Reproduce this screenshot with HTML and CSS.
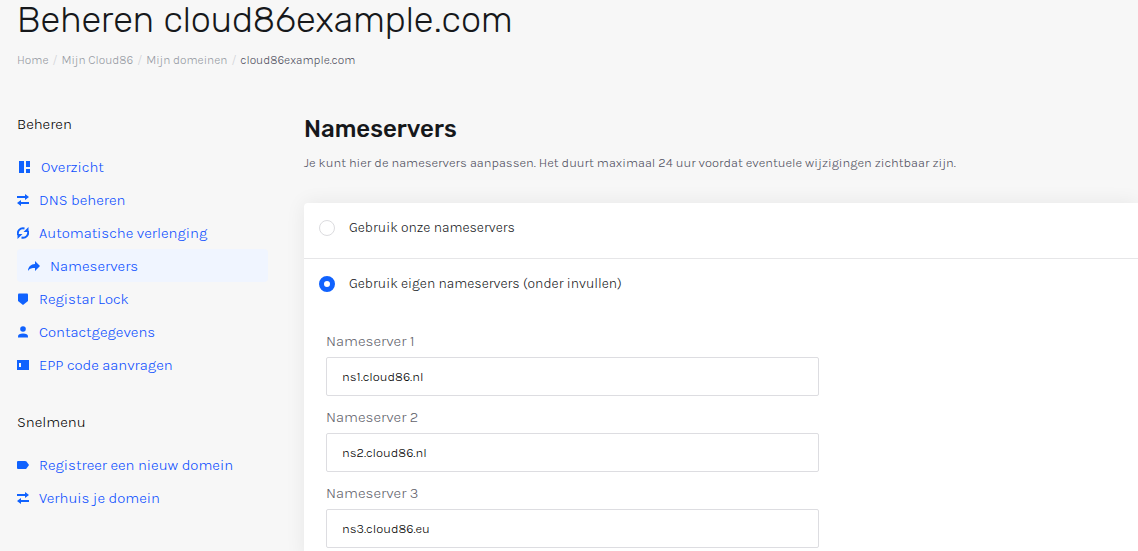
FILE: index.html
```html
<!DOCTYPE html>
<html lang="nl">
<head>
  <meta charset="UTF-8">
  <meta name="viewport" content="width=device-width, initial-scale=1.0">
  <title>Beheren cloud86example.com</title>
  <link rel="stylesheet" href="styles.css">
</head>
<body>
  <!-- Page header -->
  <header class="page-header">
    <h1>Beheren cloud86example.com</h1>
    <nav class="breadcrumb" aria-label="Breadcrumb">
      <a href="#">Home</a>
      <span class="separator">/</span>
      <a href="#">Mijn Cloud86</a>
      <span class="separator">/</span>
      <a href="#">Mijn domeinen</a>
      <span class="separator">/</span>
      <span class="current">cloud86example.com</span>
    </nav>
  </header>

  <div class="layout">
    <!-- Sidebar -->
    <aside class="sidebar">
      <h3>Beheren</h3>
      <ul class="menu">
        <li><a href="#">
          <svg class="icon icon-large" viewBox="0 0 14 12"><path d="M2 0h5v12H2zM9 0h4v6H9zM9 8h4v4H9z"/></svg>
          Overzicht
        </a></li>
        <li><a href="#">
          <svg class="icon" viewBox="0 0 12 12"><path d="M0 2h8V0l4 3-4 3V4H0zM12 8H4V6L0 9l4 3v-2h8z"/></svg>
          DNS beheren
        </a></li>
        <li><a href="#">
          <svg class="icon" viewBox="0 0 12 12"><path class="stroke" d="M1 8C0 4 3 .5 7.500 1.500M11 4c1 4-2 7.500-6.500 6.500"/><path d="M11.500 0v5H6.500zM.5 12V7h5z"/></svg>
          Automatische verlenging
        </a></li>
        <li><a href="#" class="active">
          <svg class="icon" viewBox="0 0 12 12"><path d="M7 1l5 5-5 5V8C4 8 2 8 0 11 0 7 3 4 7 4z"/></svg>
          Nameservers
        </a></li>
        <li><a href="#">
          <svg class="icon" viewBox="0 0 12 12"><path d="M1 1.500Q1 .5 2 .5h8q1 0 1 1V8L6 12 1 8z"/></svg>
          Registar Lock
        </a></li>
        <li><a href="#">
          <svg class="icon" viewBox="0 0 12 12"><circle cx="6" cy="3" r="2.800"/><path d="M1 11.500v-1C1 8.300 3 7.500 6 7.500s5 .8 5 3v1z"/></svg>
          Contactgegevens
        </a></li>
        <li><a href="#">
          <svg class="icon" viewBox="0 0 12 12"><path fill-rule="evenodd" d="M0 1h12v10H0zM2 4v4h2V4z"/></svg>
          EPP code aanvragen
        </a></li>
      </ul>

      <h3>Snelmenu</h3>
      <ul class="menu">
        <li><a href="#">
          <svg class="icon" viewBox="0 0 12 12"><path d="M0 3q0-1 1-1h7q1 0 1.500.5L12 6 9.500 9.500Q9 10 8 10H1q-1 0-1-1z"/></svg>
          Registreer een nieuw domein
        </a></li>
        <li><a href="#">
          <svg class="icon" viewBox="0 0 12 12"><path d="M0 2h8V0l4 3-4 3V4H0zM12 8H4V6L0 9l4 3v-2h8z"/></svg>
          Verhuis je domein
        </a></li>
      </ul>
    </aside>

    <!-- Nameservers -->
    <main class="content">
      <h2>Nameservers</h2>
      <p class="intro">Je kunt hier de nameservers aanpassen. Het duurt maximaal 24 uur voordat eventuele wijzigingen zichtbaar zijn.</p>

      <form class="card">
        <label class="choice" for="nsDefault">
          <input type="radio" name="nschoice" id="nsDefault" value="default">
          Gebruik onze nameservers
        </label>
        <label class="choice" for="nsCustom">
          <input type="radio" name="nschoice" id="nsCustom" value="custom" checked>
          Gebruik eigen nameservers (onder invullen)
        </label>

        <div class="fields">
          <div class="form-group">
            <label for="ns1">Nameserver 1</label>
            <input type="text" name="ns1" id="ns1" value="ns1.cloud86.nl">
          </div>
          <div class="form-group">
            <label for="ns2">Nameserver 2</label>
            <input type="text" name="ns2" id="ns2" value="ns2.cloud86.nl">
          </div>
          <div class="form-group">
            <label for="ns3">Nameserver 3</label>
            <input type="text" name="ns3" id="ns3" value="ns3.cloud86.eu">
          </div>
        </div>
      </form>
    </main>
  </div>
</body>
</html>
```
FILE: styles.css
```css
/* General Styles */
* {
  box-sizing: border-box;
}

body {
  margin: 0;
  padding-left: 17px;
  background-color: #f7f7f7;
  color: #16181b;
  font-family: Karla, Inter, sans-serif;
  font-size: 15px;
  font-weight: 300;
  line-height: 20px;
}

a {
  color: #0a4dff;
  text-decoration: none;
}

h1,
h2,
h3 {
  margin: 0;
  color: #16181b;
}

/* Page Header */
h1 {
  font-family: Rubik, Roboto, sans-serif;
  font-size: 36px;
  font-weight: 300;
  line-height: 40px;
}

.breadcrumb {
  display: flex;
  gap: 4px;
  margin-top: 10px;
  font-size: 12px;
}

.breadcrumb a {
  color: #9599a2;
}

.separator {
  color: #cfd1d6;
}

.current {
  color: #50505e;
}

.layout {
  display: grid;
  grid-template-columns: 251px 1fr;
  gap: 36px;
  margin-top: 44px;
}

/* Sidebar */
h3 {
  color: #000;
  font-size: 15px;
  font-weight: 300;
}

.menu {
  list-style: none;
  margin: 16px 0 31px;
  padding: 0;
}

.menu:last-child {
  margin-bottom: 0;
}

.menu a {
  display: flex;
  align-items: center;
  gap: 10px;
  height: 33px;
}

.menu a:hover {
  text-decoration: underline;
}

.menu .active {
  padding-left: 11px;
  border-radius: 4px;
  background-color: #f0f5ff;
}

.icon {
  width: 12px;
  height: 12px;
  fill: #1062fe;
}

.icon-large {
  width: 14px;
}

.icon .stroke {
  fill: none;
  stroke: #1062fe;
  stroke-width: 2;
}

/* Content */
h2 {
  font-family: Rubik, Roboto, sans-serif;
  font-size: 24px;
  font-weight: 500;
  line-height: 30px;
}

.intro {
  margin: 9px 0 30px;
  color: #50505e;
  font-size: 13px;
}

.card {
  border-radius: 4px 0 0 4px;
  background-color: #fff;
  box-shadow: 0 0 20px rgba(0, 0, 0, 0.07);
}

.choice {
  display: flex;
  align-items: center;
  gap: 14px;
  padding: 15px;
  font-size: 14px;
}

.choice:first-child {
  padding-bottom: 20px;
  border-bottom: 1px solid #e6e6e8;
}

input[type="radio"] {
  appearance: none;
  width: 16px;
  height: 16px;
  margin: 0;
  border: 1px solid #dcdcdf;
  border-radius: 50%;
  background-color: #fff;
}

input[type="radio"]:checked {
  border: 5px solid #1062fe;
}

.fields {
  max-width: 537px;
  padding: 22px 22px 0;
}

.form-group {
  padding-bottom: 11px;
}

.form-group label {
  display: block;
  margin-bottom: 6px;
  color: #62626b;
}

input[type="text"] {
  display: block;
  width: 100%;
  height: 39px;
  padding: 0 15px;
  border: 1px solid #dddde1;
  border-radius: 2px;
  background-color: #fff;
  color: #000;
  font-family: inherit;
  font-size: 13px;
  font-weight: 300;
}

input[type="text"]:focus {
  outline: none;
  border-color: #1062fe;
}

/* Responsive Design */
@media (max-width: 700px) {
  .layout {
    grid-template-columns: 1fr;
  }
}
```
